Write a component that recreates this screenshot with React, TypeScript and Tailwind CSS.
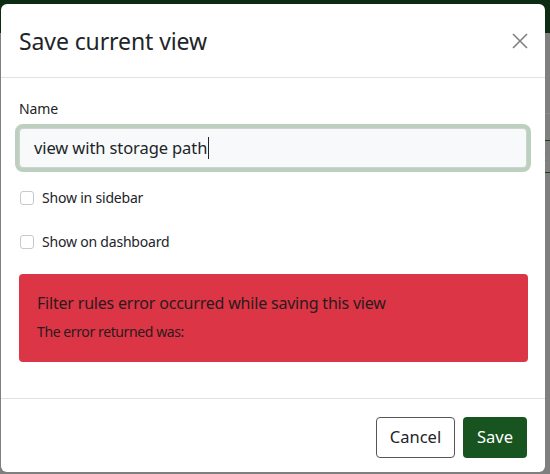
import React from "react";

export default function App() {
  const font = { fontFamily: '"Noto Sans", "Open Sans", sans-serif' };
  return (
    <div className="relative w-[550px] h-[474px] overflow-hidden bg-[#7f7f7f]" style={font}>
      {/* page behind the backdrop */}
      <div className="h-[33px] bg-[#0d2a12]" />
      <div className="absolute right-0 top-[113px] w-[10px] border-t border-[#8a8a8a]" />
      <div className="absolute right-0 top-[140px] w-[10px] border-t border-[#1d3b22]" />
      <div className="absolute right-0 top-[148px] w-[10px] text-[15px] leading-none text-[#1d3a5c]">t</div>
      <div className="absolute right-0 top-[172px] w-[10px] border-t border-[#1d3b22]" />

      {/* modal */}
      <div className="absolute left-[1px] top-[4px] w-[544px] h-[468px] bg-white rounded-[6px] flex flex-col text-[#212529]">
        <div className="h-[74px] flex items-center justify-between pl-[18px] pr-[18px] border-b border-[#dee2e6] shrink-0">
          <h5 className="text-[23px] leading-none tracking-[-0.1px] mt-[2px]">Save current view</h5>
          <svg width="16" height="16" viewBox="0 0 16 16" className="-mr-[1px] mt-[1px]">
            <path d="M1 1 L15 15 M15 1 L1 15" stroke="#808080" strokeWidth="1.6" fill="none" />
          </svg>
        </div>

        <div className="px-[17px] pt-[20px] flex flex-col shrink-0 h-[320px]">
          <label className="text-[14px] leading-[22px] ml-[1px] tracking-[-0.1px]">Name</label>
          <div className="mt-[4px] p-[4px] -mx-[3px] rounded-[8px] bg-[#bdd0bf]">
            <div className="h-[40px] rounded-[4px] border border-[#cbd5cc] bg-[#f8f9fa] flex items-center pl-[14px]">
              <span className="text-[16.5px] leading-none tracking-[-0.1px]">view with storage path</span>
              <span className="w-[1px] h-[22px] bg-[#212529] ml-[1px]" />
            </div>
          </div>

          <div className="flex items-center gap-[8px] mt-[19px] ml-[2px]">
            <span className="w-[14px] h-[14px] rounded-[3px] border border-[#c6c9cd] bg-white" />
            <span className="text-[14px] leading-none tracking-[-0.2px]">Show in sidebar</span>
          </div>
          <div className="flex items-center gap-[8px] mt-[30px] ml-[2px]">
            <span className="w-[14px] h-[14px] rounded-[3px] border border-[#c6c9cd] bg-white" />
            <span className="text-[14px] leading-none tracking-[-0.2px]">Show on dashboard</span>
          </div>

          <div className="mt-[25px] ml-[1px] h-[88px] rounded-[4px] bg-[#dc3545] px-[18px] pt-[21px] text-[#2c1a1d]">
            <div className="text-[16px] leading-none tracking-[-0.2px]">Filter rules error occurred while saving this view</div>
            <div className="text-[14px] leading-none mt-[14px] tracking-[-0.4px]">The error returned was:</div>
          </div>
        </div>

        <div className="border-t border-[#dee2e6] flex justify-end items-start gap-[8px] pt-[18px] pr-[18px]">
          <button className="h-[41px] w-[79px] rounded-[4px] border border-[#555] bg-white text-[16.5px] text-[#212529]">Cancel</button>
          <button className="h-[41px] w-[64px] rounded-[4px] bg-[#17541f] text-[16.5px] text-white">Save</button>
        </div>
      </div>
    </div>
  );
}
